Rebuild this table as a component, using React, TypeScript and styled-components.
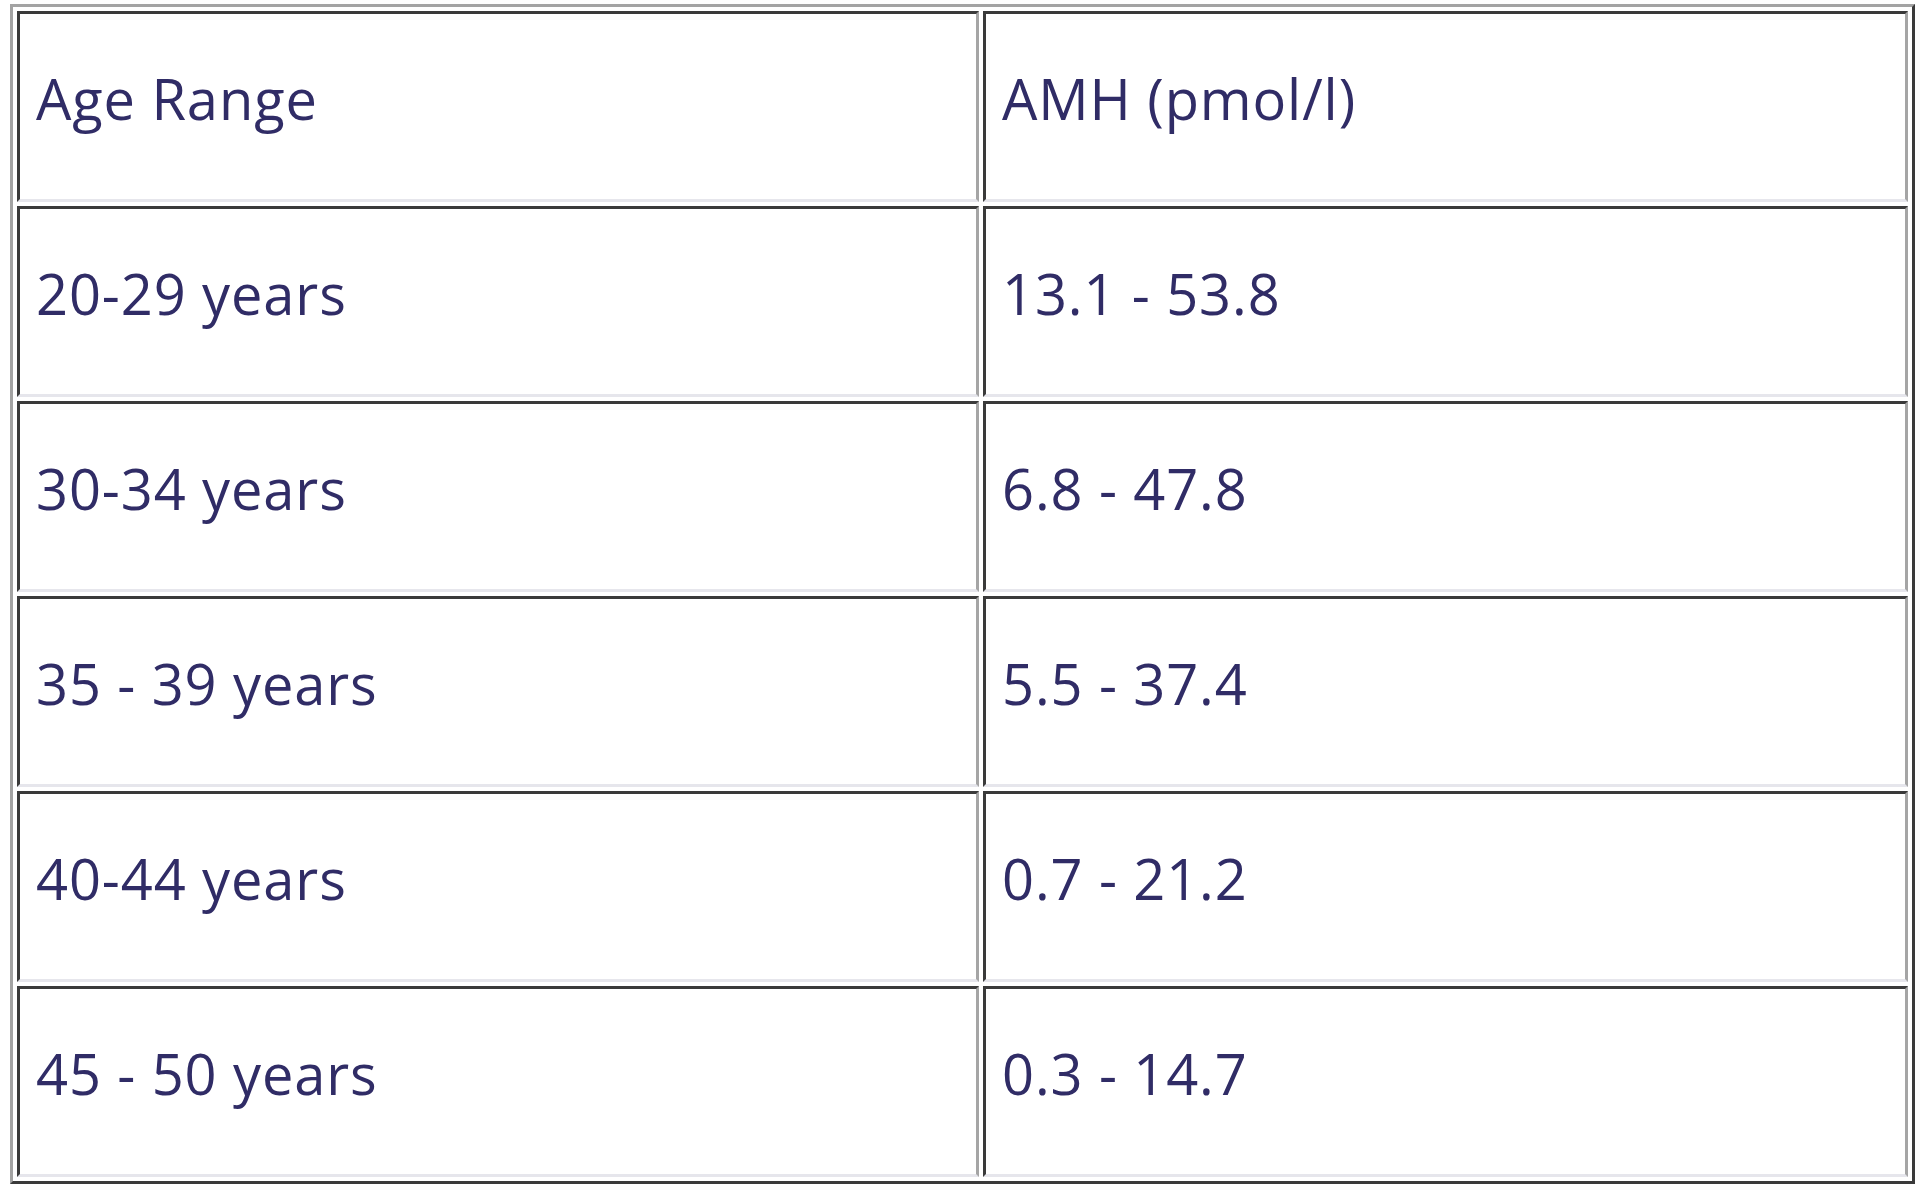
import React from 'react';
import styled, { createGlobalStyle } from 'styled-components';

const GlobalStyle = createGlobalStyle`
  body {
    margin: 0;
    background: #ffffff;
    font-family: "Open Sans", "Liberation Sans", sans-serif;
  }
`;

const Table = styled.table`
  margin: 4px 0 0 10px;
  width: 1905px;
  table-layout: fixed;
  border-collapse: separate;
  border-spacing: 4px;
  border-style: solid;
  border-width: 3px;
  border-color: #a3a3a3 #3a3a3a #3a3a3a #a3a3a3;
`;

const Cell = styled.td<{ $w: number }>`
  box-sizing: border-box;
  width: ${p => p.$w}px;
  height: 191px;
  padding: 0 16px 18px 16px;
  vertical-align: middle;
  text-align: left;
  border-style: solid;
  border-width: 3px;
  border-color: #3a3a3a #a5a5a5 #e6e6ec #3a3a3a;
  color: #302c66;
  font-size: 56px;
  font-weight: 400;
  letter-spacing: 0.9px;
  white-space: nowrap;
`;

const rows: [string, string][] = [
  ['Age Range', 'AMH (pmol/l)'],
  ['20-29 years', '13.1 - 53.8'],
  ['30-34 years', '6.8 - 47.8'],
  ['35 - 39 years', '5.5 - 37.4'],
  ['40-44 years', '0.7 - 21.2'],
  ['45 - 50 years', '0.3 - 14.7'],
];

const App = () => {
  return (
    <>
      <GlobalStyle />
      <Table>
        <tbody>
          {rows.map(([age, amh]) => (
            <tr key={age}>
              <Cell $w={962}>{age}</Cell>
              <Cell $w={925}>{amh}</Cell>
            </tr>
          ))}
        </tbody>
      </Table>
    </>
  );
};

export default App;
